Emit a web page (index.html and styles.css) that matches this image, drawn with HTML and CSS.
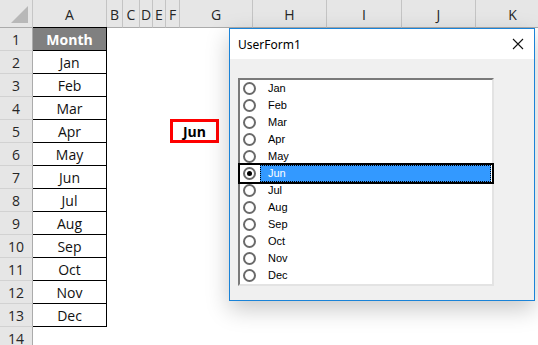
FILE: index.html
```html
<!DOCTYPE html>
<html lang="en">
<head>
    <meta charset="UTF-8">
    <title>Month picker</title>
    <link rel="stylesheet" href="styles.css">
</head>
<body>
    <div class="sheet">
        <!-- column headers -->
        <div class="corner"><span class="tri"></span></div>
        <div class="colhead">A</div>
        <div class="colhead">B</div>
        <div class="colhead">C</div>
        <div class="colhead">D</div>
        <div class="colhead">E</div>
        <div class="colhead">F</div>
        <div class="colhead">G</div>
        <div class="colhead">H</div>
        <div class="colhead">I</div>
        <div class="colhead">J</div>
        <div class="colhead">K</div>

        <!-- row headers -->
        <div class="rowhead r1">1</div>
        <div class="rowhead r2">2</div>
        <div class="rowhead r3">3</div>
        <div class="rowhead r4">4</div>
        <div class="rowhead r5">5</div>
        <div class="rowhead r6">6</div>
        <div class="rowhead r7">7</div>
        <div class="rowhead r8">8</div>
        <div class="rowhead r9">9</div>
        <div class="rowhead r10">10</div>
        <div class="rowhead r11">11</div>
        <div class="rowhead r12">12</div>
        <div class="rowhead r13">13</div>
        <div class="rowhead r14">14</div>

        <!-- column A -->
        <div class="cell head r1">Month</div>
        <div class="cell r2">Jan</div>
        <div class="cell r3">Feb</div>
        <div class="cell r4">Mar</div>
        <div class="cell r5">Apr</div>
        <div class="cell r6">May</div>
        <div class="cell r7">Jun</div>
        <div class="cell r8">Jul</div>
        <div class="cell r9">Aug</div>
        <div class="cell r10">Sep</div>
        <div class="cell r11">Oct</div>
        <div class="cell r12">Nov</div>
        <div class="cell r13">Dec</div>

        <!-- picked value -->
        <div class="picked r5">Jun</div>
    </div>

    <div class="userform">
        <div class="titlebar">
            <span class="title">UserForm1</span>
            <svg class="close" width="12" height="12" viewBox="0 0 12 12">
                <path d="M1 1 L11 11 M11 1 L1 11" stroke="#111" stroke-width="1.1" fill="none"/>
            </svg>
        </div>
        <div class="formbody">
            <div class="listbox">
                <div class="item"><span class="radio"></span>Jan</div>
                <div class="item"><span class="radio"></span>Feb</div>
                <div class="item"><span class="radio"></span>Mar</div>
                <div class="item"><span class="radio"></span>Apr</div>
                <div class="item"><span class="radio"></span>May</div>
                <div class="item selected"><span class="radio on"></span><span class="label">Jun</span></div>
                <div class="item"><span class="radio"></span>Jul</div>
                <div class="item"><span class="radio"></span>Aug</div>
                <div class="item"><span class="radio"></span>Sep</div>
                <div class="item"><span class="radio"></span>Oct</div>
                <div class="item"><span class="radio"></span>Nov</div>
                <div class="item"><span class="radio"></span>Dec</div>
            </div>
        </div>
    </div>
</body>
</html>
```

FILE: styles.css
```css
body {
    margin: 0;
    width: 538px;
    height: 345px;
    overflow: hidden;
    position: relative;
    background: #fff;
    font-family: "Open Sans", "Liberation Sans", sans-serif;
}

.sheet {
    display: grid;
    grid-template-columns: 33px 74px 16px 17px 13px 13px 14px 73px 74px 75px 74px 74px;
    grid-template-rows: 28px repeat(14, 23px);
    width: 550px;
}

/* headers */
.corner {
    grid-column: 1;
    grid-row: 1;
    background: #e6e6e6;
    border-right: 1px solid #c6c6c6;
    border-bottom: 1px solid #ababab;
    position: relative;
}

.tri {
    position: absolute;
    right: 4px;
    bottom: 4px;
    width: 0;
    height: 0;
    border-left: 17px solid transparent;
    border-bottom: 17px solid #b8b8b8;
}

.colhead {
    grid-row: 1;
    background: #e6e6e6;
    border-right: 1px solid #c4c4c4;
    border-bottom: 1px solid #ababab;
    font-size: 14px;
    color: #262626;
    display: flex;
    align-items: center;
    justify-content: center;
    padding-top: 1px;
}

.rowhead {
    grid-column: 1;
    background: #e6e6e6;
    border-right: 1px solid #ababab;
    border-bottom: 1px solid #d2d2d2;
    font-size: 14px;
    color: #262626;
    display: flex;
    align-items: center;
    justify-content: center;
}

.r1 { grid-row: 2; }
.r2 { grid-row: 3; }
.r3 { grid-row: 4; }
.r4 { grid-row: 5; }
.r5 { grid-row: 6; }
.r6 { grid-row: 7; }
.r7 { grid-row: 8; }
.r8 { grid-row: 9; }
.r9 { grid-row: 10; }
.r10 { grid-row: 11; }
.r11 { grid-row: 12; }
.r12 { grid-row: 13; }
.r13 { grid-row: 14; }
.r14 { grid-row: 15; }

/* cells */
.cell {
    grid-column: 2;
    border-right: 1px solid #000;
    border-bottom: 1px solid #000;
    font-size: 14px;
    color: #111;
    display: flex;
    align-items: center;
    justify-content: center;
}

.cell.head {
    background: #808080;
    color: #fff;
    font-weight: bold;
    border-top: 1px solid #000;
    margin-top: -1px;
}

.picked {
    grid-column: 7 / 9;
    justify-self: start;
    margin-left: 4px;
    width: 43px;
    border: 3px solid #ff0000;
    font-size: 14px;
    font-weight: bold;
    color: #000;
    display: flex;
    align-items: center;
    justify-content: center;
    margin-top: -1px;
}

/* userform window */
.userform {
    position: absolute;
    left: 229px;
    top: 28px;
    width: 304px;
    height: 271px;
    border: 1px solid #1a83d8;
    background: #f0f0f0;
    box-shadow: 0 8px 22px rgba(0, 0, 0, 0.22);
    display: flex;
    flex-direction: column;
}

.titlebar {
    height: 30px;
    background: #fff;
    display: flex;
    align-items: center;
    justify-content: space-between;
    padding: 0 10px 0 8px;
}

.title {
    font-family: "Noto Sans", sans-serif;
    font-size: 12px;
    color: #000;
}

.close {
    display: block;
}

.formbody {
    flex: 1;
    padding: 19px 0 0 8px;
}

.listbox {
    width: 252px;
    height: 204px;
    background: #fff;
    border-top: 2px solid #7a7a7a;
    border-left: 2px solid #7a7a7a;
    border-right: 2px solid #e3e3e3;
    border-bottom: 2px solid #e3e3e3;
    font-family: "Liberation Sans", sans-serif;
    font-size: 11px;
    color: #000;
}

.item {
    height: 17px;
    display: flex;
    align-items: center;
    padding-left: 3px;
    padding-bottom: 1px;
    box-sizing: border-box;
}

.radio {
    width: 9px;
    height: 9px;
    border: 2px solid #6a6a6a;
    border-radius: 50%;
    margin-right: 12px;
    position: relative;
    flex: none;
}

.radio.on::after {
    content: "";
    position: absolute;
    left: 2px;
    top: 2px;
    width: 5px;
    height: 5px;
    border-radius: 50%;
    background: #000;
}

.item.selected {
    outline: 2px solid #000;
    position: relative;
    padding-bottom: 0;
}

.item.selected .radio {
    margin-right: 4px;
}

.item.selected .label {
    flex: 1;
    align-self: stretch;
    background: #3399ff;
    color: #fff;
    display: flex;
    align-items: center;
    padding-left: 7px;
    padding-bottom: 1px;
    border: 1px dotted #000;
    margin-right: 1px;
}
```
